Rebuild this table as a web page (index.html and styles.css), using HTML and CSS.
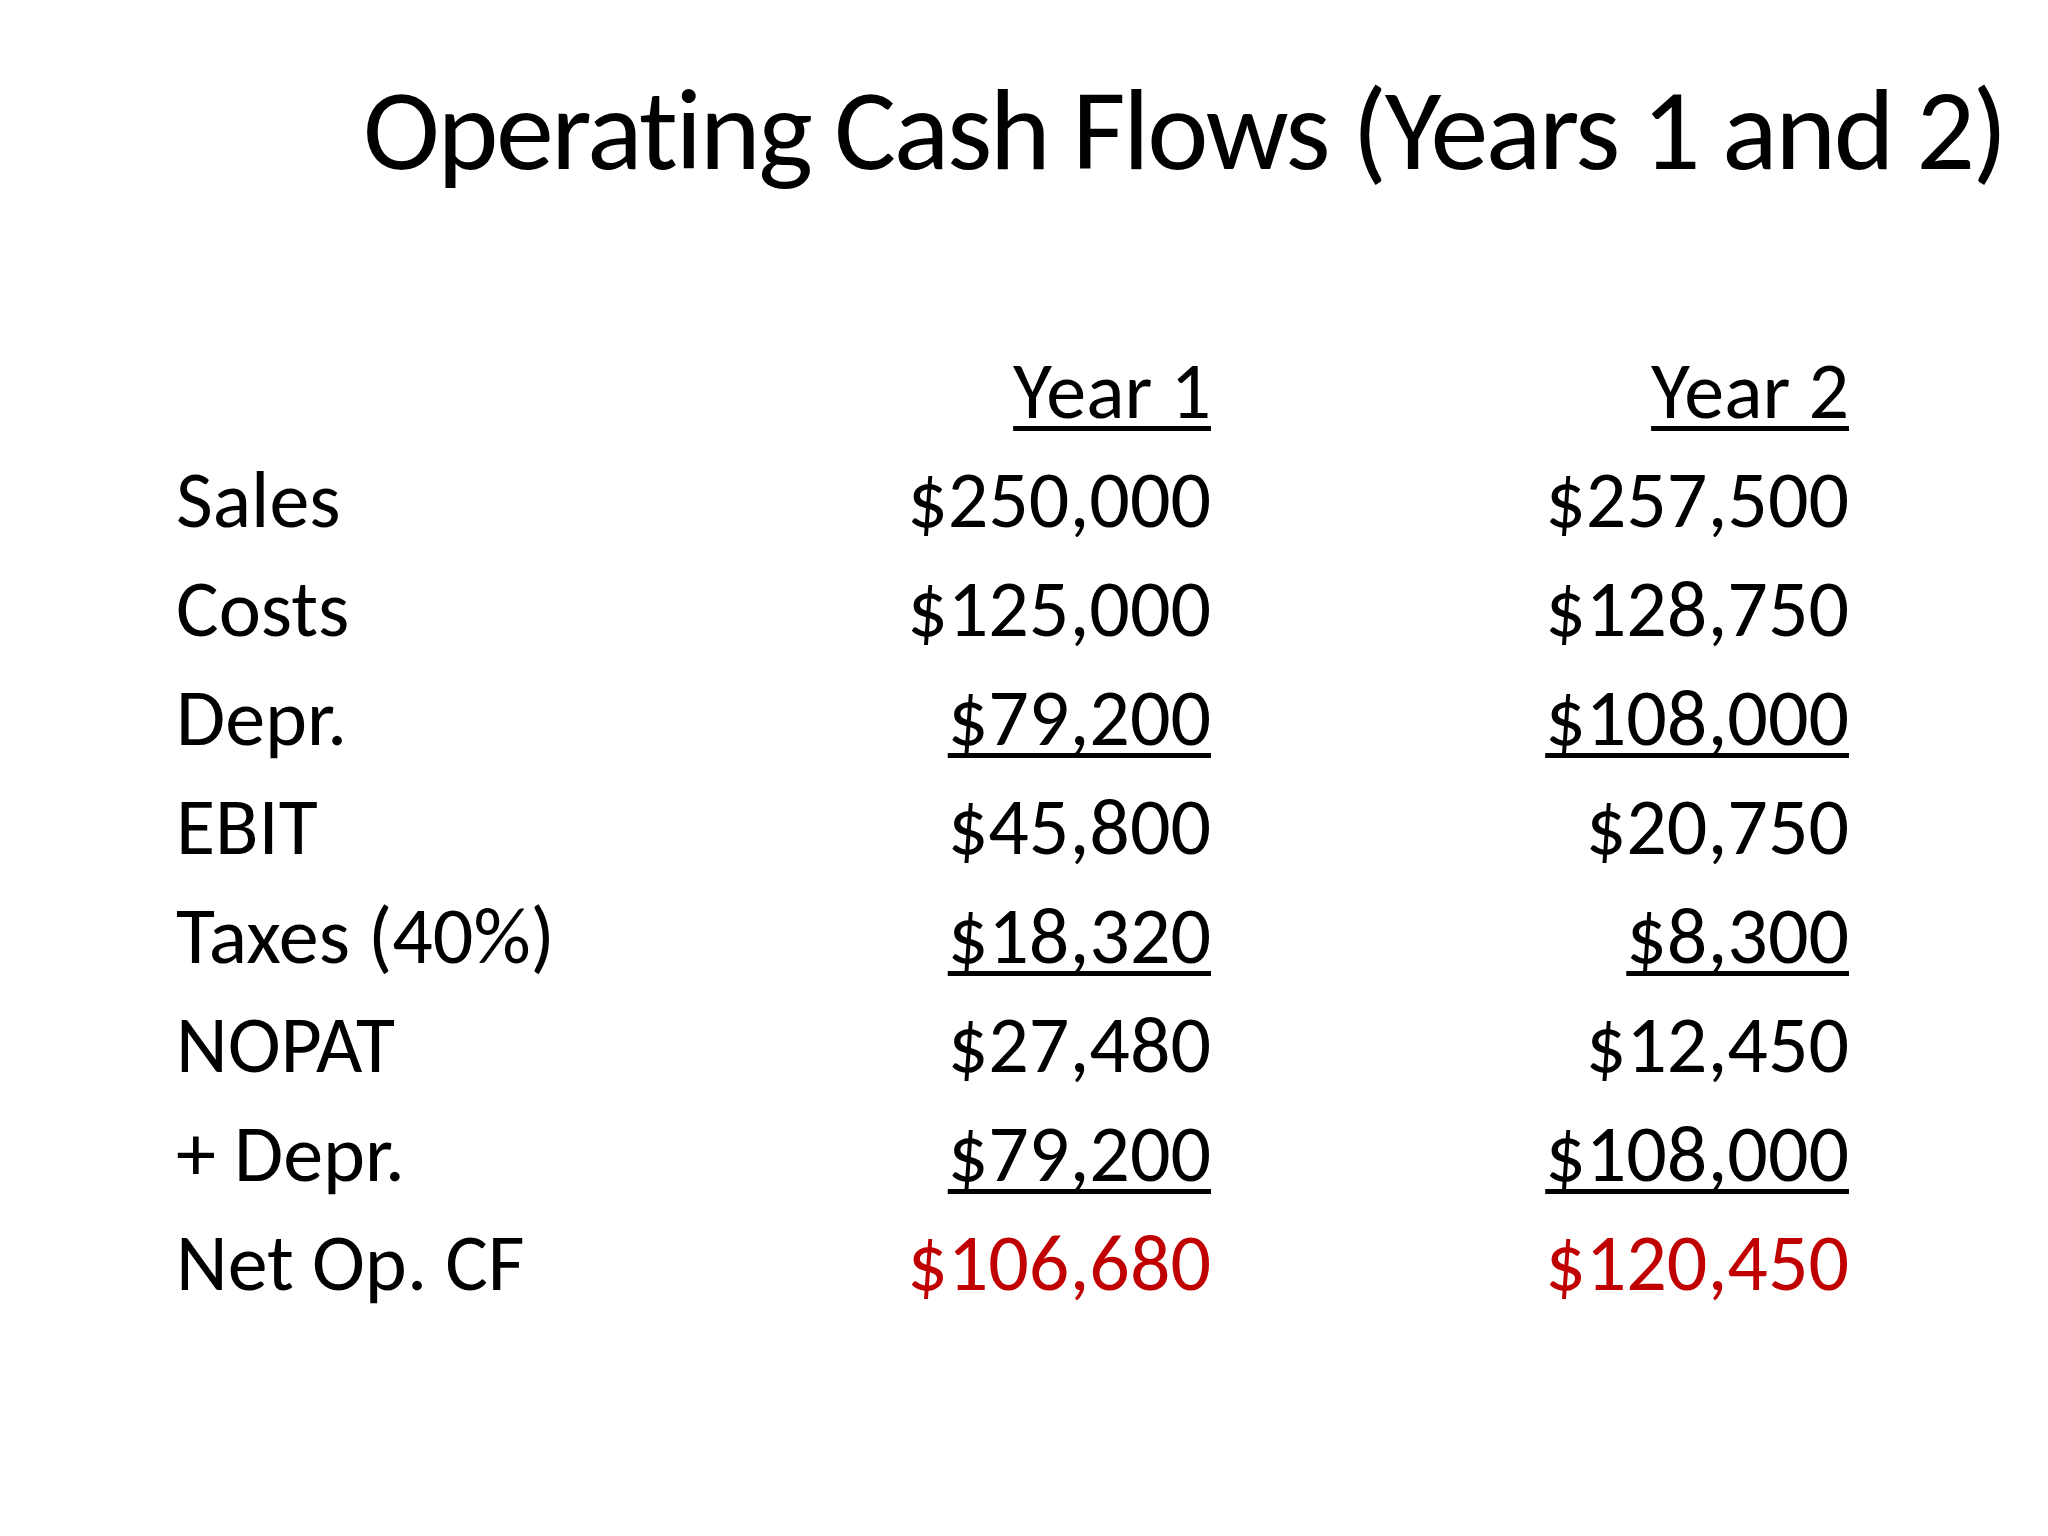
FILE: index.html
```html
<!DOCTYPE html>
<html>
<head>
<meta charset="utf-8">
<link rel="stylesheet" href="styles.css">
<title>Operating Cash Flows</title>
</head>
<body>
<main class="slide">
  <h1 class="title">Operating Cash Flows (Years 1 and 2)</h1>
  <div class="table">
    <div class="label"></div>
    <div class="num"><span class="ul">Year 1</span></div>
    <div class="num"><span class="ul">Year 2</span></div>

    <div class="label">Sales</div>
    <div class="num">$250,000</div>
    <div class="num">$257,500</div>

    <div class="label">Costs</div>
    <div class="num">$125,000</div>
    <div class="num">$128,750</div>

    <div class="label">Depr.</div>
    <div class="num"><span class="ul">$79,200</span></div>
    <div class="num"><span class="ul">$108,000</span></div>

    <div class="label">EBIT</div>
    <div class="num">$45,800</div>
    <div class="num">$20,750</div>

    <div class="label">Taxes (40%)</div>
    <div class="num"><span class="ul">$18,320</span></div>
    <div class="num"><span class="ul">$8,300</span></div>

    <div class="label">NOPAT</div>
    <div class="num">$27,480</div>
    <div class="num">$12,450</div>

    <div class="label">+ Depr.</div>
    <div class="num"><span class="ul">$79,200</span></div>
    <div class="num"><span class="ul">$108,000</span></div>

    <div class="label">Net Op. CF</div>
    <div class="num red">$106,680</div>
    <div class="num red">$120,450</div>
  </div>
</main>
</body>
</html>
```

FILE: styles.css
```css
html, body {
  margin: 0;
  padding: 0;
  background: #ffffff;
}

.slide {
  width: 2048px;
  height: 1536px;
  font-family: Carlito, Calibri, "Open Sans", sans-serif;
  color: #000000;
  box-sizing: border-box;
  padding-top: 55px;
  overflow: hidden;
}

.title {
  margin: 0 0 0 363px;
  font-size: 116px;
  font-weight: normal;
  line-height: 150px;
  letter-spacing: -2.4px;
  font-variant-ligatures: none;
  white-space: nowrap;
}

.table {
  margin-top: 131px;
  margin-left: 176px;
  display: grid;
  grid-template-columns: 550px 485px 638px;
  grid-auto-rows: 109px;
  font-size: 80px;
  line-height: 109px;
}

.label {
  text-align: left;
  white-space: nowrap;
}

.num {
  text-align: right;
  white-space: nowrap;
}

.ul {
  text-decoration: underline;
  text-decoration-thickness: 5px;
  text-underline-offset: 8px;
  text-decoration-skip-ink: none;
}

.red {
  color: #c00000;
}
```
